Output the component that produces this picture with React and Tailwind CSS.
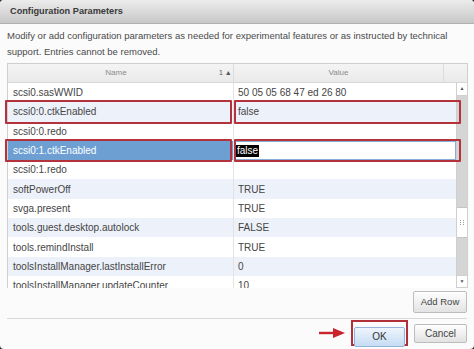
import React from "react";

const rows = [
  ["scsi0.sasWWID", "50 05 05 68 47 ed 26 80"],
  ["scsi0:0.ctkEnabled", "false", "boxed"],
  ["scsi0:0.redo", ""],
  ["scsi0:1.ctkEnabled", "false", "selected"],
  ["scsi0:1.redo", ""],
  ["softPowerOff", "TRUE"],
  ["svga.present", "TRUE"],
  ["tools.guest.desktop.autolock", "FALSE"],
  ["tools.remindInstall", "TRUE"],
  ["toolsInstallManager.lastInstallError", "0"],
  ["toolsInstallManager.updateCounter", "10"],
];

function Row({ r, i, last }) {
  const [name, value, kind] = r;
  const stripe = i % 2 === 1 ? "bg-[#edf1fa]" : "bg-white";
  const selected = kind === "selected";
  const boxed = kind === "boxed" || selected;
  return (
    <div className={`${last ? "h-[12px] overflow-hidden" : "h-[19.3px]"} relative shrink-0`}>
      <div className={`h-[19.3px] flex ${stripe}`}>
        <div
          className={`relative w-[225px] shrink-0 flex items-center pl-[5px] ${
            selected ? "bg-[#6d9fd3] text-white" : "text-[#454545]"
          }`}
        >
          {name}
          {boxed && (
            <div className="absolute top-[-2px] bottom-[-2px] left-[-3px] right-[1px] border-2 border-[#b3323c] rounded-[1px] z-10" />
          )}
        </div>
        <div className="relative flex-1 flex items-center border-l border-[#e3e3e3] text-[#454545]">
          {selected ? (
            <div className="absolute inset-0 bg-white border border-[#86acd8] flex items-center pl-[1px]">
              <span className="bg-black text-white leading-[12px] px-[1px]">false</span>
            </div>
          ) : (
            <span className="pl-[4px]">{value}</span>
          )}
          {boxed && (
            <div className="absolute top-[-2px] bottom-[-2px] left-[0px] right-[-5px] border-2 border-[#b3323c] rounded-[1px] z-10" />
          )}
        </div>
      </div>
    </div>
  );
}

export default function App() {
  return (
    <div
      className="w-[474px] h-[349px] bg-[#2b2b2b]"
      style={{ fontFamily: '"Liberation Sans", Arial, sans-serif' }}
    >
      <div className="w-full h-full rounded-[4px] overflow-hidden bg-[#fbfbfb] flex flex-col">
        {/* title bar */}
        <div className="h-[24px] shrink-0 bg-gradient-to-b from-[#ececec] to-[#c8c8c8] border-b border-[#b0b0b0] flex items-center px-[10px]">
          <span className="text-[9.2px] font-bold text-[#3a3a3a]">Configuration Parameters</span>
        </div>

        {/* description */}
        <div className="pt-[4px] px-[7px] text-[9.5px] leading-[16px] text-[#4a4a4a]">
          Modify or add configuration parameters as needed for experimental features or as instructed by technical
          <br />
          support. Entries cannot be removed.
        </div>

        {/* table */}
        <div className="mt-[3px] ml-[7px] mr-[6px] h-[225px] border border-[#cfcfcf] bg-white flex flex-col shrink-0">
          {/* header */}
          <div className="h-[19px] shrink-0 flex bg-gradient-to-b from-[#f4f4f4] to-[#eaeaea] border-b border-[#d6d6d6] text-[8px] text-[#8a8a8a]">
            <div className="w-[225px] flex items-center relative">
              <span className="flex-1 text-center pl-[5px]">Name</span>
              <span className="w-[14px] text-[7px] text-[#555]">1 ▲</span>
            </div>
            <div className="w-[210px] flex items-center justify-center border-l border-[#dcdcdc]">
              Value
            </div>
            <div className="flex-1 border-l border-[#dcdcdc]" />
          </div>
          {/* body */}
          <div className="flex-1 flex min-h-0">
            <div className="flex-1 flex flex-col text-[10px]">
              {rows.map((r, i) => (
                <Row key={i} r={r} i={i} last={i === rows.length - 1} />
              ))}
            </div>
            {/* scrollbar */}
            <div className="w-[11px] shrink-0 border-l border-[#cfcfcf] flex flex-col bg-[#d5d5d5]">
              <div className="h-[13px] bg-white flex items-center justify-center text-[5px] text-[#555] border-b border-[#d0d0d0]">
                ▲
              </div>
              <div className="h-[111px]" />
              <div className="h-[31px] bg-white border-y border-[#c4c4c4] flex items-center justify-center">
                <svg width="5" height="5" viewBox="0 0 5 5">
                  <rect x="0" y="0" width="1" height="1" fill="#9a9a9a" />
                  <rect x="3" y="0" width="1" height="1" fill="#9a9a9a" />
                  <rect x="0" y="2" width="1" height="1" fill="#9a9a9a" />
                  <rect x="3" y="2" width="1" height="1" fill="#9a9a9a" />
                  <rect x="0" y="4" width="1" height="1" fill="#9a9a9a" />
                  <rect x="3" y="4" width="1" height="1" fill="#9a9a9a" />
                </svg>
              </div>
              <div className="flex-1" />
              <div className="h-[12px] bg-white flex items-center justify-center text-[5px] text-[#555] border-t border-[#d0d0d0]">
                ▼
              </div>
            </div>
          </div>
        </div>

        {/* add row */}
        <div className="flex justify-end pr-[7px] mt-[3px] shrink-0">
          <button className="w-[54px] h-[22px] rounded-[2px] border border-[#bdbdbd] bg-gradient-to-b from-[#fefefe] to-[#e3e3e3] text-[9.5px] text-[#444]">
            Add Row
          </button>
        </div>

        {/* separator */}
        <div className="mt-[5px] mx-[7px] border-t border-[#d9d9d9] shrink-0" />

        {/* footer */}
        <div className="h-[28px] shrink-0 flex items-center justify-end pr-[7px]">
          <svg width="26" height="10" viewBox="0 0 26 10" className="mr-[6px]">
            <rect x="0" y="3.8" width="16" height="2.4" fill="#c9232d" />
            <polygon points="14,0 26,5 14,10" fill="#c9232d" />
          </svg>
          <div className="w-[57px] h-[26px] border-2 border-[#b02f39] p-[1px]">
            <button className="w-full h-full rounded-[2px] border border-[#93b4d8] bg-gradient-to-b from-[#eef5fd] to-[#c6dcf3] text-[10px] text-[#333]">
              OK
            </button>
          </div>
          <button className="ml-[6px] w-[53px] h-[19px] rounded-[2px] border border-[#bcbcbc] bg-gradient-to-b from-[#fefefe] to-[#e2e2e2] text-[10px] text-[#444]">
            Cancel
          </button>
        </div>
      </div>
    </div>
  );
}
